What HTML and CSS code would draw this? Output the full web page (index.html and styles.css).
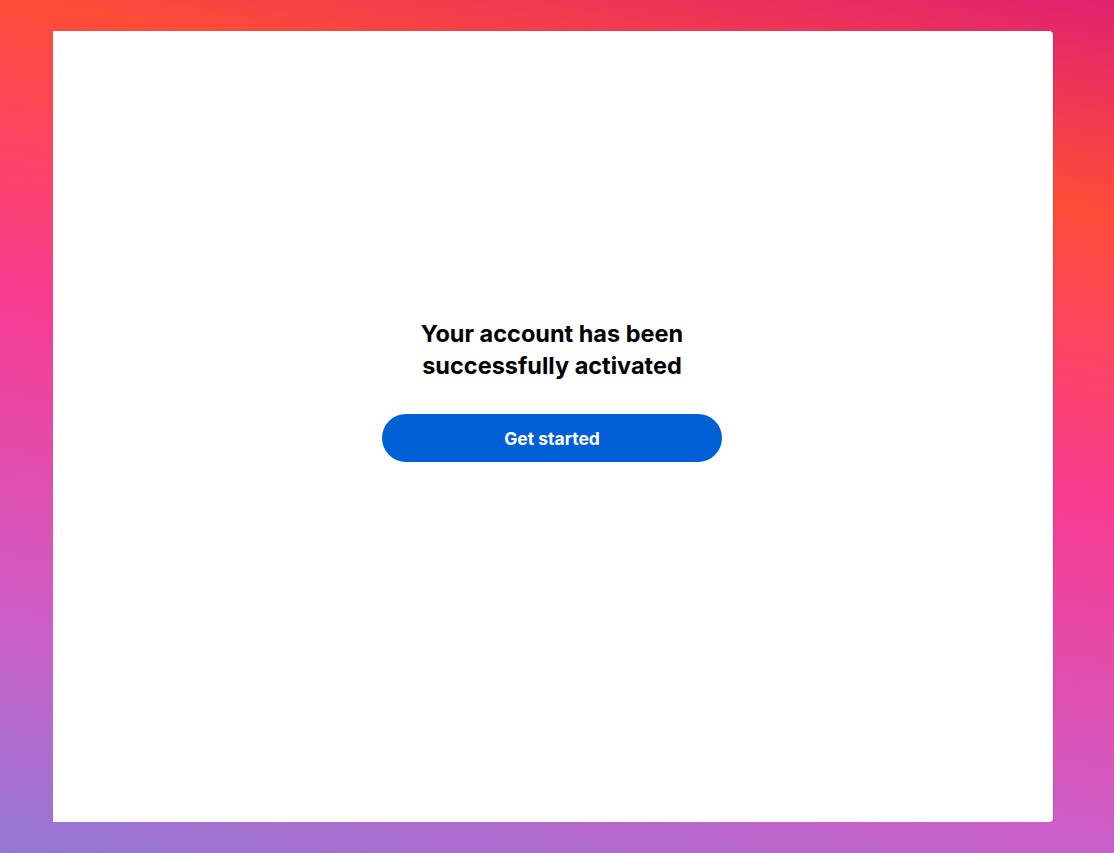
FILE: index.html
```html
<!DOCTYPE html>
<html lang="en">
  <head>
    <meta charset="UTF-8" />
    <meta name="viewport" content="width=device-width, initial-scale=1.0" />
    <title>Account activated</title>
    <link rel="stylesheet" href="styles.css">
  </head>
  <body>
    <div class="page">
      <div class="card">
        <div class="activated">
          <h1>Your account has been<br />successfully activated</h1>
          <button class="get-started">Get started</button>
        </div>
      </div>
    </div>
  </body>
</html>
```

FILE: styles.css
```css
html,
body {
  margin: 0;
  height: 100%;
}
body {
  font-family: Inter, "Noto Sans", Arial, sans-serif;
  background: linear-gradient(
    191deg,
    #e0226f 0%,
    #ff4c37 20%,
    #f73c91 48%,
    #cd5ec8 78%,
    #9279d4 100%
  );
}
.page {
  box-sizing: border-box;
  height: 100%;
  padding: 31px 61px 31px 53px;
}
.card {
  height: 100%;
  background: white;
  border-radius: 0 4px 4px 0;
  box-shadow: 1px 0 0 rgba(0, 0, 0, 0.08);
  display: flex;
  align-items: center;
  justify-content: center;
  padding: 0 2px 73px 0;
  box-sizing: border-box;
}
.activated {
  display: flex;
  flex-direction: column;
  align-items: center;
}
h1 {
  margin: 0 0 32px;
  font-size: 23.5px;
  line-height: 32px;
  font-weight: 700;
  color: #000;
  text-align: center;
}
.get-started {
  width: 340px;
  height: 48px;
  border: none;
  border-radius: 24px;
  background: #005fd7;
  color: white;
  font-family: inherit;
  font-size: 17.5px;
  font-weight: 700;
  cursor: pointer;
}
.get-started:hover {
  background: #0053bd;
}
```
